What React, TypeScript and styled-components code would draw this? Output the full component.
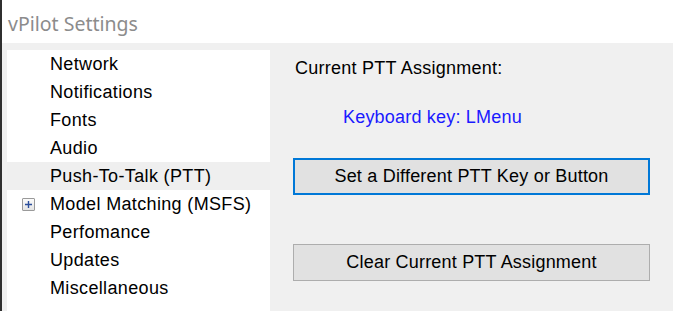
import React from "react";
import styled, { createGlobalStyle } from "styled-components";

const Global = createGlobalStyle`
  html, body { margin: 0; padding: 0; background: #f0f0f0; overflow: hidden; }
  * { box-sizing: border-box; }
`;

const Window = styled.div`
  width: 673px;
  height: 311px;
  display: flex;
  flex-direction: column;
  border-left: 2px solid #2f2f2f;
  background: #f0f0f0;
  font-family: "Liberation Sans", Arial, sans-serif;
  overflow: hidden;
`;

const TitleBar = styled.div`
  height: 43px;
  flex: none;
  background: #ffffff;
  display: flex;
  align-items: center;
  padding-left: 6px;
  padding-top: 3px;
  font-family: "Noto Sans", "Open Sans", sans-serif;
  font-size: 19.5px;
  color: #8c8c8c;
`;

const Body = styled.div`
  flex: 1;
  display: flex;
  padding: 7px 0 0 5px;
  min-height: 0;
`;

const Tree = styled.div`
  width: 263px;
  flex: none;
  background: #ffffff;
  display: flex;
  flex-direction: column;
`;

const TreeRow = styled.div<{ $selected?: boolean }>`
  height: 28px;
  flex: none;
  display: flex;
  align-items: center;
  position: relative;
  padding-left: 43px;
  font-size: 18px;
  letter-spacing: 0.35px;
  color: #000;
  background: ${(p) => (p.$selected ? "#efefef" : "transparent")};
`;

const Expander = styled.span`
  position: absolute;
  left: 15px;
  top: 8px;
  width: 13px;
  height: 13px;
  border: 1px solid #9a9a9a;
  border-radius: 1px;
  background: linear-gradient(#fbfbfb, #e4e4e4);
  display: flex;
  align-items: center;
  justify-content: center;
`;

const Right = styled.div`
  flex: 1;
  display: flex;
  flex-direction: column;
  align-items: flex-start;
  padding: 8px 0 0 23px;
`;

const Label = styled.div`
  font-size: 18px;
  line-height: 20px;
  letter-spacing: 0.25px;
  color: #000;
  margin-left: 2px;
`;

const KeyValue = styled.div`
  font-size: 18px;
  line-height: 20px;
  letter-spacing: 0.2px;
  color: #1a1aff;
  margin: 29px 0 0 50px;
`;

const Button = styled.button<{ $focused?: boolean; $gap: number }>`
  width: 357px;
  height: 37px;
  margin-top: ${(p) => p.$gap}px;
  background: #e1e1e1;
  border: ${(p) => (p.$focused ? "2px solid #0078d7" : "1px solid #adadad")};
  border-radius: 0;
  font-family: "Liberation Sans", Arial, sans-serif;
  font-size: 18px;
  letter-spacing: 0.2px;
  color: #000;
  padding: 0;
  display: flex;
  align-items: center;
  justify-content: center;
`;

const items = [
  "Network",
  "Notifications",
  "Fonts",
  "Audio",
  "Push-To-Talk (PTT)",
  "Model Matching (MSFS)",
  "Perfomance",
  "Updates",
  "Miscellaneous",
];

export default function App() {
  return (
    <>
      <Global />
      <Window>
        <TitleBar>vPilot Settings</TitleBar>
        <Body>
          <Tree>
            {items.map((it, i) => (
              <TreeRow key={it} $selected={i === 4}>
                {i === 5 && (
                  <Expander>
                    <svg width="9" height="9" viewBox="0 0 9 9">
                      <path d="M1 4.5h7M4.5 1v7" stroke="#2a4d9b" strokeWidth="1.4" />
                    </svg>
                  </Expander>
                )}
                {it}
              </TreeRow>
            ))}
          </Tree>
          <Right>
            <Label>Current PTT Assignment:</Label>
            <KeyValue>Keyboard key: LMenu</KeyValue>
            <Button $focused $gap={31}>Set a Different PTT Key or Button</Button>
            <Button $gap={49}>Clear Current PTT Assignment</Button>
          </Right>
        </Body>
      </Window>
    </>
  );
}
